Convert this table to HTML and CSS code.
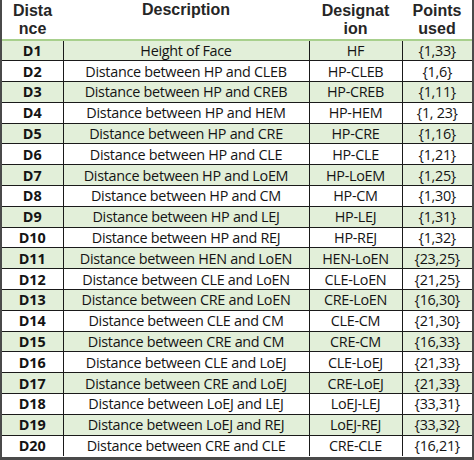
FILE: index.html
```html
<!DOCTYPE html>
<html>
<head>
<meta charset="utf-8">
<link rel="stylesheet" href="styles.css">
</head>
<body>
<div class="frame">
<table class="tbl">
<colgroup><col class="c1"><col class="c2"><col class="c3"><col class="c4"></colgroup>
<thead>
<tr class="hdr"><th>Dista<br>nce</th><th class="top">Description</th><th>Designat<br>ion</th><th>Points<br>used</th></tr>
</thead>
<tbody>
<tr class="g"><td class="id">D1</td><td>Height of Face</td><td>HF</td><td>{1,33}</td></tr>
<tr><td class="id">D2</td><td>Distance between HP and CLEB</td><td>HP-CLEB</td><td>{1,6}</td></tr>
<tr class="g"><td class="id">D3</td><td>Distance between HP and CREB</td><td>HP-CREB</td><td>{1,11}</td></tr>
<tr><td class="id">D4</td><td>Distance between HP and HEM</td><td>HP-HEM</td><td>{1, 23}</td></tr>
<tr class="g"><td class="id">D5</td><td>Distance between HP and CRE</td><td>HP-CRE</td><td>{1,16}</td></tr>
<tr><td class="id">D6</td><td>Distance between HP and CLE</td><td>HP-CLE</td><td>{1,21}</td></tr>
<tr class="g"><td class="id">D7</td><td>Distance between HP and LoEM</td><td>HP-LoEM</td><td>{1,25}</td></tr>
<tr><td class="id">D8</td><td>Distance between HP and CM</td><td>HP-CM</td><td>{1,30}</td></tr>
<tr class="g"><td class="id">D9</td><td>Distance between HP and LEJ</td><td>HP-LEJ</td><td>{1,31}</td></tr>
<tr><td class="id">D10</td><td>Distance between HP and REJ</td><td>HP-REJ</td><td>{1,32}</td></tr>
<tr class="g"><td class="id">D11</td><td>Distance between HEN and LoEN</td><td>HEN-LoEN</td><td>{23,25}</td></tr>
<tr><td class="id">D12</td><td>Distance between CLE and LoEN</td><td>CLE-LoEN</td><td>{21,25}</td></tr>
<tr class="g"><td class="id">D13</td><td>Distance between CRE and LoEN</td><td>CRE-LoEN</td><td>{16,30}</td></tr>
<tr><td class="id">D14</td><td>Distance between CLE and CM</td><td>CLE-CM</td><td>{21,30}</td></tr>
<tr class="g"><td class="id">D15</td><td>Distance between CRE and CM</td><td>CRE-CM</td><td>{16,33}</td></tr>
<tr><td class="id">D16</td><td>Distance between CLE and LoEJ</td><td>CLE-LoEJ</td><td>{21,33}</td></tr>
<tr class="g"><td class="id">D17</td><td>Distance between CRE and LoEJ</td><td>CRE-LoEJ</td><td>{21,33}</td></tr>
<tr><td class="id">D18</td><td>Distance between LoEJ and LEJ</td><td>LoEJ-LEJ</td><td>{33,31}</td></tr>
<tr class="g"><td class="id">D19</td><td>Distance between LoEJ and REJ</td><td>LoEJ-REJ</td><td>{33,32}</td></tr>
<tr><td class="id">D20</td><td>Distance between CRE and CLE</td><td>CRE-CLE</td><td>{16,21}</td></tr>
</tbody>
</table>
</div>
</body>
</html>
```
FILE: styles.css
```css
html, body {
  margin: 0;
  padding: 0;
  background: #ffffff;
}
.frame {
  width: 474px;
  height: 460px;
  box-sizing: border-box;
  border-left: 2px solid #4a4a4a;
  border-right: 2px solid #4a4a4a;
  border-bottom: 3px solid #4a4a4a;
  overflow: hidden;
}
.tbl {
  width: 470px;
  border-collapse: collapse;
  table-layout: fixed;
  font-family: "Open Sans", "Noto Sans", sans-serif;
  color: #141414;
}
.c1 { width: 61px; }
.c2 { width: 246px; }
.c3 { width: 93px; }
.c4 { width: 70px; }
.hdr th {
  height: 38px;
  padding: 0;
  font-family: "Liberation Sans", Arial, sans-serif;
  font-weight: bold;
  font-size: 16px;
  line-height: 18px;
  color: #262626;
  text-align: center;
  vertical-align: middle;
  border-bottom: 2px solid #a8d08d;
}
.hdr th.top {
  vertical-align: top;
  padding-top: 1px;
}
tbody tr {
  height: 20.8px;
}
tbody td {
  padding: 0;
  font-size: 14.4px;
  line-height: 17px;
  text-align: center;
  white-space: nowrap;
  overflow: hidden;
  border-bottom: 1px solid #1a1a1a;
  border-left: 1px solid #1a1a1a;
  border-right: 1px solid #1a1a1a;
  letter-spacing: -0.3px;
}
tbody td:first-child { border-left: none; }
tbody td:last-child { border-right: none; }
tbody tr:last-child td { border-bottom: none; }
tbody tr.g td { background: #e2efd9; }
td.id {
  font-weight: bold;
  letter-spacing: 0;
}
```
